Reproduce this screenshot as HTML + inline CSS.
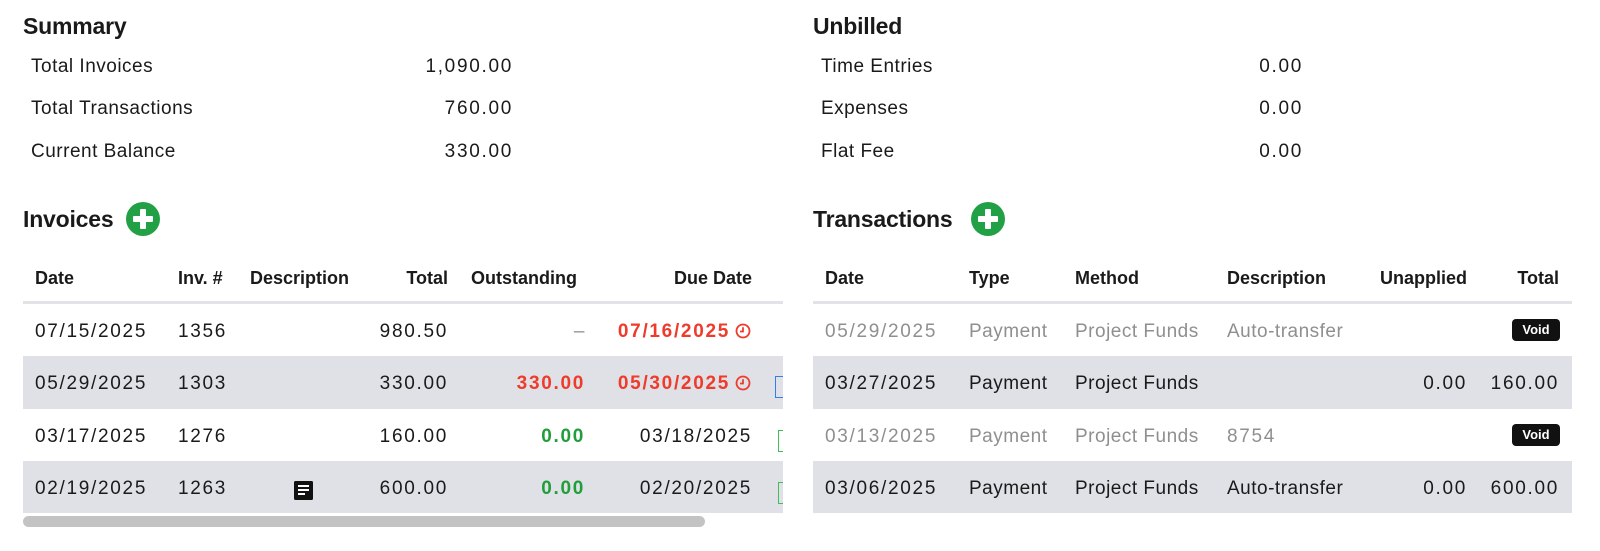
<!DOCTYPE html>
<html><head><meta charset="utf-8"><style>
body{margin:0;width:1600px;height:551px;background:#fff;font-family:"Liberation Sans",Arial,sans-serif;color:#1a1a1a;position:relative;overflow:hidden}
.a{position:absolute;white-space:nowrap;line-height:24px;height:24px;font-size:19px;letter-spacing:0.5px}
.n{letter-spacing:1.7px}
.r{text-align:right}
.h{font-weight:bold;font-size:23px;letter-spacing:-0.2px}
.th{font-weight:bold;font-size:18px;letter-spacing:0}
.red{color:#ee3b2b;font-weight:bold}
.grn{color:#1f9e3a;font-weight:bold}
.gry{color:#8f8f8f}
.band{position:absolute;background:#dfe1e6}
.plus{position:absolute;width:34px;height:34px;border-radius:50%;background:#22a045}
.plus:before{content:"";position:absolute;left:14px;top:7px;width:6px;height:20px;background:#fff;border-radius:1px}
.plus:after{content:"";position:absolute;left:7px;top:14px;width:20px;height:6px;background:#fff;border-radius:1px}
.void{position:absolute;background:#111;color:#fff;font-weight:bold;font-size:13px;border-radius:4px;width:48px;height:22px;line-height:22px;text-align:center}
</style></head><body>
<!-- Summary -->
<div class="a h" style="left:23px;top:14px">Summary</div>
<div class="a" style="left:31px;top:55px">Total Invoices</div><div class="a r n" style="right:1087px;top:55px">1,090.00</div>
<div class="a" style="left:31px;top:97px">Total Transactions</div><div class="a r n" style="right:1087px;top:97px">760.00</div>
<div class="a" style="left:31px;top:140px">Current Balance</div><div class="a r n" style="right:1087px;top:140px">330.00</div>
<!-- Unbilled -->
<div class="a h" style="left:813px;top:14px">Unbilled</div>
<div class="a" style="left:821px;top:55px">Time Entries</div><div class="a r n" style="right:297px;top:55px">0.00</div>
<div class="a" style="left:821px;top:97px">Expenses</div><div class="a r n" style="right:297px;top:97px">0.00</div>
<div class="a" style="left:821px;top:140px">Flat Fee</div><div class="a r n" style="right:297px;top:140px">0.00</div>

<!-- Invoices -->
<div class="a h" style="left:23px;top:207px">Invoices</div>
<div class="plus" style="left:126px;top:202px"></div>
<div class="a th" style="left:35px;top:266px">Date</div>
<div class="a th" style="left:178px;top:266px">Inv. #</div>
<div class="a th" style="left:250px;top:266px">Description</div>
<div class="a th r" style="right:1152px;top:266px">Total</div>
<div class="a th" style="left:471px;top:266px">Outstanding</div>
<div class="a th r" style="right:848px;top:266px">Due Date</div>
<div style="position:absolute;left:23px;top:301px;width:760px;height:3px;background:#e2e3e6"></div>
<div class="band" style="left:23px;top:356px;width:760px;height:53px"></div>
<div class="band" style="left:23px;top:461px;width:760px;height:52px"></div>

<div class="a n" style="left:35px;top:320px">07/15/2025</div><div class="a n" style="left:178px;top:320px">1356</div>
<div class="a r n" style="right:1152px;top:320px">980.50</div><div class="a r gry" style="right:1015px;top:320px">–</div>
<div class="a r n red" style="right:870px;top:320px">07/16/2025</div>

<div class="a n" style="left:35px;top:372px">05/29/2025</div><div class="a n" style="left:178px;top:372px">1303</div>
<div class="a r n" style="right:1152px;top:372px">330.00</div><div class="a r n red" style="right:1015px;top:372px">330.00</div>
<div class="a r n red" style="right:870px;top:372px">05/30/2025</div>

<div class="a n" style="left:35px;top:425px">03/17/2025</div><div class="a n" style="left:178px;top:425px">1276</div>
<div class="a r n" style="right:1152px;top:425px">160.00</div><div class="a r n grn" style="right:1015px;top:425px">0.00</div>
<div class="a r n" style="right:848px;top:425px">03/18/2025</div>

<div class="a n" style="left:35px;top:477px">02/19/2025</div><div class="a n" style="left:178px;top:477px">1263</div>
<div class="a r n" style="right:1152px;top:477px">600.00</div><div class="a r n grn" style="right:1015px;top:477px">0.00</div>
<div class="a r n" style="right:848px;top:477px">02/20/2025</div>

<!-- clocks -->
<svg style="position:absolute;left:735px;top:323px" width="16" height="16" viewBox="0 0 16 16"><circle cx="8" cy="8" r="6.5" fill="none" stroke="#ee3b2b" stroke-width="1.8"/><path d="M8 4.2V8.5H5" fill="none" stroke="#ee3b2b" stroke-width="1.8"/></svg>
<svg style="position:absolute;left:735px;top:375px" width="16" height="16" viewBox="0 0 16 16"><circle cx="8" cy="8" r="6.5" fill="none" stroke="#ee3b2b" stroke-width="1.8"/><path d="M8 4.2V8.5H5" fill="none" stroke="#ee3b2b" stroke-width="1.8"/></svg>
<!-- note icon -->
<svg style="position:absolute;left:294px;top:481px" width="19" height="19" viewBox="0 0 19 19"><rect width="19" height="19" rx="1.5" fill="#111"/><path d="M4 5h11M4 9h11M4 13h7" stroke="#fff" stroke-width="2"/></svg>
<!-- partial boxes -->
<div style="position:absolute;left:775px;top:376px;width:10px;height:20px;border:1.5px solid #2f7ff0;border-right:none"></div>
<div style="position:absolute;left:778px;top:430px;width:10px;height:20px;border:1.5px solid #3fbf5a;border-right:none"></div>
<div style="position:absolute;left:778px;top:482px;width:10px;height:20px;border:1.5px solid #3fbf5a;border-right:none"></div>
<div style="position:absolute;left:783px;top:350px;width:40px;height:170px;background:#fff"></div>
<!-- scrollbar -->
<div style="position:absolute;left:23px;top:516px;width:682px;height:11px;border-radius:6px;background:#c3c3c3"></div>

<!-- Transactions -->
<div class="a h" style="left:813px;top:207px">Transactions</div>
<div class="plus" style="left:971px;top:202px"></div>
<div class="a th" style="left:825px;top:266px">Date</div>
<div class="a th" style="left:969px;top:266px">Type</div>
<div class="a th" style="left:1075px;top:266px">Method</div>
<div class="a th" style="left:1227px;top:266px">Description</div>
<div class="a th r" style="right:133px;top:266px">Unapplied</div>
<div class="a th r" style="right:41px;top:266px">Total</div>
<div style="position:absolute;left:813px;top:301px;width:759px;height:3px;background:#e2e3e6"></div>
<div class="band" style="left:813px;top:356px;width:759px;height:53px"></div>
<div class="band" style="left:813px;top:461px;width:759px;height:52px"></div>

<div class="a n gry" style="left:825px;top:320px">05/29/2025</div><div class="a gry" style="left:969px;top:320px">Payment</div>
<div class="a gry" style="left:1075px;top:320px">Project Funds</div><div class="a gry" style="left:1227px;top:320px">Auto-transfer</div>
<div class="void" style="left:1512px;top:319px">Void</div>

<div class="a n" style="left:825px;top:372px">03/27/2025</div><div class="a" style="left:969px;top:372px">Payment</div>
<div class="a" style="left:1075px;top:372px">Project Funds</div>
<div class="a r n" style="right:133px;top:372px">0.00</div><div class="a r n" style="right:41px;top:372px">160.00</div>

<div class="a n gry" style="left:825px;top:425px">03/13/2025</div><div class="a gry" style="left:969px;top:425px">Payment</div>
<div class="a gry" style="left:1075px;top:425px">Project Funds</div><div class="a n gry" style="left:1227px;top:425px">8754</div>
<div class="void" style="left:1512px;top:424px">Void</div>

<div class="a n" style="left:825px;top:477px">03/06/2025</div><div class="a" style="left:969px;top:477px">Payment</div>
<div class="a" style="left:1075px;top:477px">Project Funds</div><div class="a" style="left:1227px;top:477px">Auto-transfer</div>
<div class="a r n" style="right:133px;top:477px">0.00</div><div class="a r n" style="right:41px;top:477px">600.00</div>
</body></html>
